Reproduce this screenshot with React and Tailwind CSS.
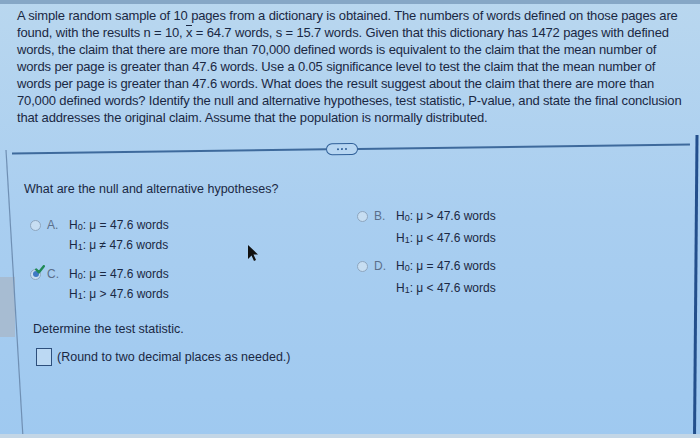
import React from "react";

function Radio({ checked }) {
  return (
    <span className="relative inline-flex w-[11px] h-[11px] shrink-0 rounded-full border border-[#8ea6bf] bg-[#c7def2] items-center justify-center">
      {checked && <span className="w-[6px] h-[6px] rounded-full bg-[#3f79c4]" />}
      {checked && (
        <svg className="absolute left-[4px] top-[-5px]" width="10" height="9" viewBox="0 0 10 9">
          <path d="M1.2 4.5 L4 7.3 L8.8 1.2" fill="none" stroke="#1f8a55" strokeWidth="2.4" strokeLinecap="round" strokeLinejoin="round" />
        </svg>
      )}
    </span>
  );
}

function H({ sub, rel }) {
  return (
    <div className="whitespace-nowrap">
      H<sub className="text-[9px] relative top-[1px]">{sub}</sub>
      <span>: </span>
      <span>μ{rel}47.6 words</span>
    </div>
  );
}

function Option({ letter, h0, h1, checked, lead }) {
  return (
    <div className="flex items-start">
      <div className={`flex items-center ${lead}`}>
        <Radio checked={checked} />
        <span className="ml-[6px] w-[22px] text-[#5b6f8a]">{letter}.</span>
      </div>
      <div className={lead}>
        <H sub="0" rel={h0} />
        <H sub="1" rel={h1} />
      </div>
    </div>
  );
}

export default function App() {
  return (
    <div
      className="relative w-[700px] h-[438px] overflow-hidden bg-linear-to-b from-[#b9d7ef] via-[#a9cef0] to-[#9fc9f0] text-[#1a2843]"
      style={{ fontFamily: '"Liberation Sans", Arial, sans-serif' }}
    >
      <div className="h-[4px] bg-[#86a7c6]" />
      <p className="pl-[17px] pt-[3px] text-[13px] leading-[17px] tracking-[-0.15px] whitespace-nowrap">
        A simple random sample of 10 pages from a dictionary is obtained. The numbers of words defined on those pages are
        <br />
        found, with the results n = 10, <span className="relative inline-block">x<span className="absolute left-0 right-0 top-[1px] h-px bg-[#1a2843]" /></span> = 64.7 words, s = 15.7 words. Given that this dictionary has 1472 pages with defined
        <br />
        words, the claim that there are more than 70,000 defined words is equivalent to the claim that the mean number of
        <br />
        words per page is greater than 47.6 words. Use a 0.05 significance level to test the claim that the mean number of
        <br />
        words per page is greater than 47.6 words. What does the result suggest about the claim that there are more than
        <br />
        70,000 defined words? Identify the null and alternative hypotheses, test statistic, P-value, and state the final conclusion
        <br />
        that addresses the original claim. Assume that the population is normally distributed.
      </p>

      <div className="mt-[17px] ml-[12px] w-[678px] h-[12px] flex items-center rotate-[-0.75deg]">
        <div className="w-[314px] h-[1.5px] bg-[#3e6a9c]" />
        <div className="w-[32px] h-[12px] rounded-full border-[1.5px] border-[#2f5f98] bg-[#b7d6f2] flex items-center justify-center gap-[2px]">
          <span className="w-[2px] h-[2px] rounded-full bg-[#2f5f98]" />
          <span className="w-[2px] h-[2px] rounded-full bg-[#2f5f98]" />
          <span className="w-[2px] h-[2px] rounded-full bg-[#2f5f98]" />
        </div>
        <div className="flex-1 h-[1.5px] bg-[#3e6a9c]" />
      </div>

      <div className="mt-[26px] pl-[24px] text-[12.5px] leading-[16px]">What are the null and alternative hypotheses?</div>

      <div className="mt-[18px] flex text-[12px]">
        <div className="w-[357px] pl-[30px] flex flex-col gap-[9px]">
          <Option letter="A" h0=" = " h1=" ≠ " lead="leading-[20px]" />
          <Option letter="C" h0=" = " h1=" > " checked lead="leading-[20px]" />
        </div>
        <div className="mt-[-10px] flex flex-col gap-[6px]">
          <Option letter="B" h0=" > " h1=" < " lead="leading-[22px]" />
          <Option letter="D" h0=" = " h1=" < " lead="leading-[22px]" />
        </div>
      </div>

      <div className="mt-[17px] pl-[33px] text-[12.5px] leading-[16px]">Determine the test statistic.</div>
      <div className="mt-[11px] pl-[36px] flex items-center text-[12.5px]">
        <div className="w-[16px] h-[18px] border border-[#2d4f7c] bg-[#bcd9f3]" />
        <span className="ml-[5px]">(Round to two decimal places as needed.)</span>
      </div>

      <div className="absolute left-0 top-[277px] w-[15px] h-[60px] bg-[#a7bcd2]" />
      <svg className="absolute inset-0 pointer-events-none" width="700" height="438">
        <line x1="6" y1="150" x2="23" y2="438" stroke="#6f8fb3" strokeWidth="1.2" />
        <line x1="697" y1="135" x2="694.5" y2="438" stroke="#234f8c" strokeWidth="3" />
        <path d="M248 245 L248 259 L251.5 255.5 L254 261 L256 260 L253.5 254.5 L258 254.5 Z" fill="#111" />
      </svg>
      <div className="absolute left-0 right-0 bottom-0 h-[4px] bg-[#c3d6e6]" />
    </div>
  );
}
